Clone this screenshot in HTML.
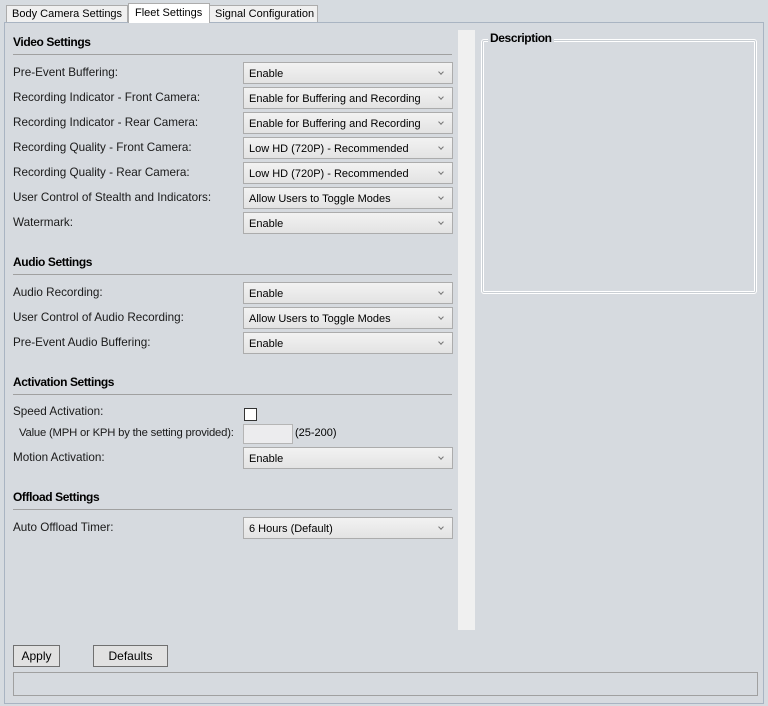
<!DOCTYPE html>
<html><head><style>
body{margin:0;width:768px;height:706px;background:#d6dbe0;font-family:"Liberation Sans",sans-serif;font-size:12px;color:#000;position:relative;overflow:hidden}
.a{position:absolute;white-space:nowrap}
.tab{position:absolute;top:5px;height:17px;background:#f0f0f0;border:1px solid #acacac;border-bottom:none;line-height:16px;padding:0 0 0 5px;box-sizing:border-box;white-space:nowrap;font-size:11px;overflow:hidden}
.panel{position:absolute;left:4px;top:22px;width:760px;height:682px;background:#d6dadf;border:1px solid #a9b4c2;box-sizing:border-box}
.lbl{position:absolute;left:13px;color:#1a1a1a;white-space:nowrap;font-size:11.7px}
.h{position:absolute;left:13px;font-weight:bold;letter-spacing:-0.4px;white-space:nowrap}
.ln{position:absolute;left:13px;width:439px;height:1px;background:#a0a0a0}
.dd{position:absolute;left:243px;width:210px;height:22px;box-sizing:border-box;border:1px solid #acacac;background:linear-gradient(#f2f2f2,#e3e3e3);padding-left:5px;line-height:22px;font-size:11px;white-space:nowrap}
.dd:after{content:"";position:absolute;right:9px;top:7px;width:3px;height:3px;border-right:1px solid #777;border-bottom:1px solid #777;transform:rotate(45deg)}
.btn{position:absolute;top:645px;height:22px;box-sizing:border-box;border:1px solid #707070;background:#e1e1e1;text-align:center;line-height:20px}
</style></head><body>
<div class="panel"></div>
<div class="tab" style="left:6px;width:122px">Body Camera Settings</div>
<div class="tab" style="left:209px;width:109px">Signal Configuration</div>
<div class="tab" style="left:128px;top:3px;height:20px;width:82px;background:#fff;line-height:19px;z-index:2;padding-left:6px">Fleet Settings</div>

<div class="h" style="top:35px">Video Settings</div><div class="ln" style="top:54px"></div>
<div class="lbl" style="top:66px">Pre-Event Buffering:</div><div class="dd" style="top:62px">Enable</div>
<div class="lbl" style="top:91px">Recording Indicator - Front Camera:</div><div class="dd" style="top:87px">Enable for Buffering and Recording</div>
<div class="lbl" style="top:116px">Recording Indicator - Rear Camera:</div><div class="dd" style="top:112px">Enable for Buffering and Recording</div>
<div class="lbl" style="top:141px">Recording Quality - Front Camera:</div><div class="dd" style="top:137px">Low HD (720P) - Recommended</div>
<div class="lbl" style="top:166px">Recording Quality - Rear Camera:</div><div class="dd" style="top:162px">Low HD (720P) - Recommended</div>
<div class="lbl" style="top:191px">User Control of Stealth and Indicators:</div><div class="dd" style="top:187px">Allow Users to Toggle Modes</div>
<div class="lbl" style="top:216px">Watermark:</div><div class="dd" style="top:212px">Enable</div>

<div class="h" style="top:255px">Audio Settings</div><div class="ln" style="top:274px"></div>
<div class="lbl" style="top:286px">Audio Recording:</div><div class="dd" style="top:282px">Enable</div>
<div class="lbl" style="top:311px">User Control of Audio Recording:</div><div class="dd" style="top:307px">Allow Users to Toggle Modes</div>
<div class="lbl" style="top:336px">Pre-Event Audio Buffering:</div><div class="dd" style="top:332px">Enable</div>

<div class="h" style="top:375px">Activation Settings</div><div class="ln" style="top:394px"></div>
<div class="lbl" style="top:405px">Speed Activation:</div>
<div class="a" style="left:244px;top:408px;width:13px;height:13px;box-sizing:border-box;border:1px solid #333;background:#fff"></div>
<div class="lbl" style="top:427px;left:19px;font-size:11.3px;letter-spacing:-0.2px">Value (MPH or KPH by the setting provided):</div>
<div class="a" style="left:243px;top:424px;width:50px;height:20px;box-sizing:border-box;border:1px solid #b5b5b5;background:#ececee"></div>
<div class="a" style="left:295px;top:427px;font-size:11px">(25-200)</div>
<div class="lbl" style="top:451px">Motion Activation:</div><div class="dd" style="top:447px">Enable</div>

<div class="h" style="top:490px">Offload Settings</div><div class="ln" style="top:509px"></div>
<div class="lbl" style="top:521px">Auto Offload Timer:</div><div class="dd" style="top:517px">6 Hours (Default)</div>

<div class="a" style="left:458px;top:30px;width:17px;height:600px;background:#f0f0f0"></div>

<div class="a" style="left:481px;top:39px;width:276px;height:255px;box-sizing:border-box;border:1px solid #fff;border-radius:3px;box-shadow:inset 0 0 0 1px #c9ced3,inset 0 0 0 2px #fff"></div>
<div class="a" style="left:488px;top:31px;background:#d6dadf;font-weight:bold;padding:0 2px;letter-spacing:-0.4px">Description</div>

<div class="btn" style="left:13px;width:47px">Apply</div>
<div class="btn" style="left:93px;width:75px">Defaults</div>
<div class="a" style="left:13px;top:672px;width:745px;height:24px;box-sizing:border-box;border:1px solid #a0a0a0"></div>
</body></html>
